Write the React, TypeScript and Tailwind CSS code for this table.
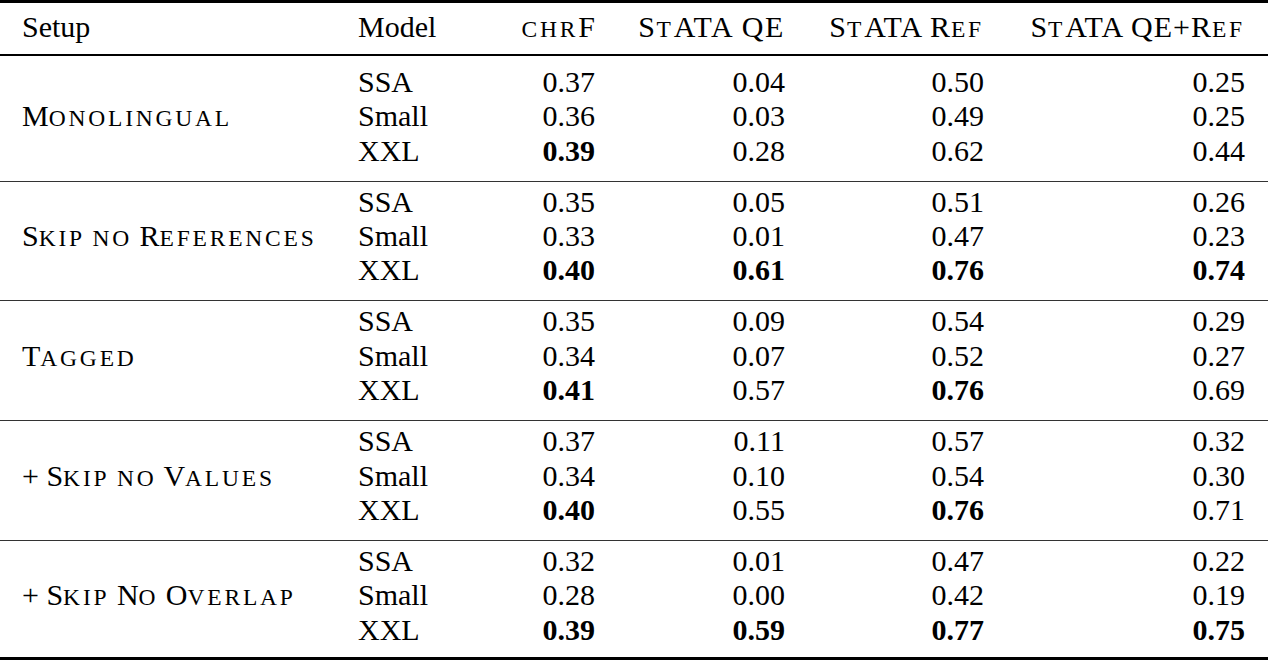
const groups = [
  {
    setup: "Monolingual",
    rows: [
      ["SSA", "0.37", "0.04", "0.50", "0.25"],
      ["Small", "0.36", "0.03", "0.49", "0.25"],
      ["XXL", "*0.39", "0.28", "0.62", "0.44"],
    ],
  },
  {
    setup: "Skip no References",
    rows: [
      ["SSA", "0.35", "0.05", "0.51", "0.26"],
      ["Small", "0.33", "0.01", "0.47", "0.23"],
      ["XXL", "*0.40", "*0.61", "*0.76", "*0.74"],
    ],
  },
  {
    setup: "Tagged",
    rows: [
      ["SSA", "0.35", "0.09", "0.54", "0.29"],
      ["Small", "0.34", "0.07", "0.52", "0.27"],
      ["XXL", "*0.41", "0.57", "*0.76", "0.69"],
    ],
  },
  {
    setup: "+ Skip no Values",
    rows: [
      ["SSA", "0.37", "0.11", "0.57", "0.32"],
      ["Small", "0.34", "0.10", "0.54", "0.30"],
      ["XXL", "*0.40", "0.55", "*0.76", "0.71"],
    ],
  },
  {
    setup: "+ Skip No Overlap",
    rows: [
      ["SSA", "0.32", "0.01", "0.47", "0.22"],
      ["Small", "0.28", "0.00", "0.42", "0.19"],
      ["XXL", "*0.39", "*0.59", "*0.77", "*0.75"],
    ],
  },
]

// small caps the way latex sets them: lowercase runs become smaller capitals
const SC = ({ text }: { text: string }) => {
  const parts = text.match(/[a-z]+|[^a-z]+/g) || []
  return (
    <>
      {parts.map((p, i) =>
        /[a-z]/.test(p) ? (
          <span key={i} className="text-[23.5px] leading-none uppercase tracking-[2.8px]">
            {p}
          </span>
        ) : (
          <span key={i}>{p}</span>
        )
      )}
    </>
  )
}

const cols = "grid grid-cols-[336px_120px_117px_190px_199px_261px] pl-[22px] pr-[23px]"

const Num = ({ v }: { v: string }) => {
  const bold = v.startsWith("*")
  return <div className={bold ? "text-right font-bold" : "text-right"}>{bold ? v.slice(1) : v}</div>
}

export default function App() {
  return (
    <div className="w-[1268px] bg-white text-black font-['Liberation_Serif','Times_New_Roman',serif] text-[30px] leading-[34.4px]">
      <div className="h-[3px] bg-black" />
      <div className={cols + " pt-[7px] pb-[10px]"}>
        <div>Setup</div>
        <div>Model</div>
        <div className="text-right">
          <SC text="chrF" />
        </div>
        <div className="text-right tracking-[1.6px]">
          <SC text="StATA QE" />
        </div>
        <div className="text-right tracking-[1px]">
          <SC text="StATA Ref" />
        </div>
        <div className="text-right tracking-[1px]">
          <SC text="StATA QE+Ref" />
        </div>
      </div>
      <div className="h-[2px] bg-black" />

      {groups.map((g, gi) => (
        <div key={g.setup}>
          {gi > 0 && <div className="h-px bg-[#333]" />}
          <div
            className={
              cols +
              (gi === 0 ? " pt-[8.6px] pb-[12.4px]" : gi === 4 ? " pt-[3px] pb-[9.3px]" : " pt-[3px] pb-[12.6px]")
            }
          >
            <div className="row-span-3 self-center">
              <SC text={g.setup} />
            </div>
            {g.rows.map((r) => (
              <div key={r[0]} className="contents">
                <div>{r[0]}</div>
                <Num v={r[1]} />
                <Num v={r[2]} />
                <Num v={r[3]} />
                <Num v={r[4]} />
              </div>
            ))}
          </div>
        </div>
      ))}
      <div className="h-[3.5px] bg-black" />
    </div>
  )
}
